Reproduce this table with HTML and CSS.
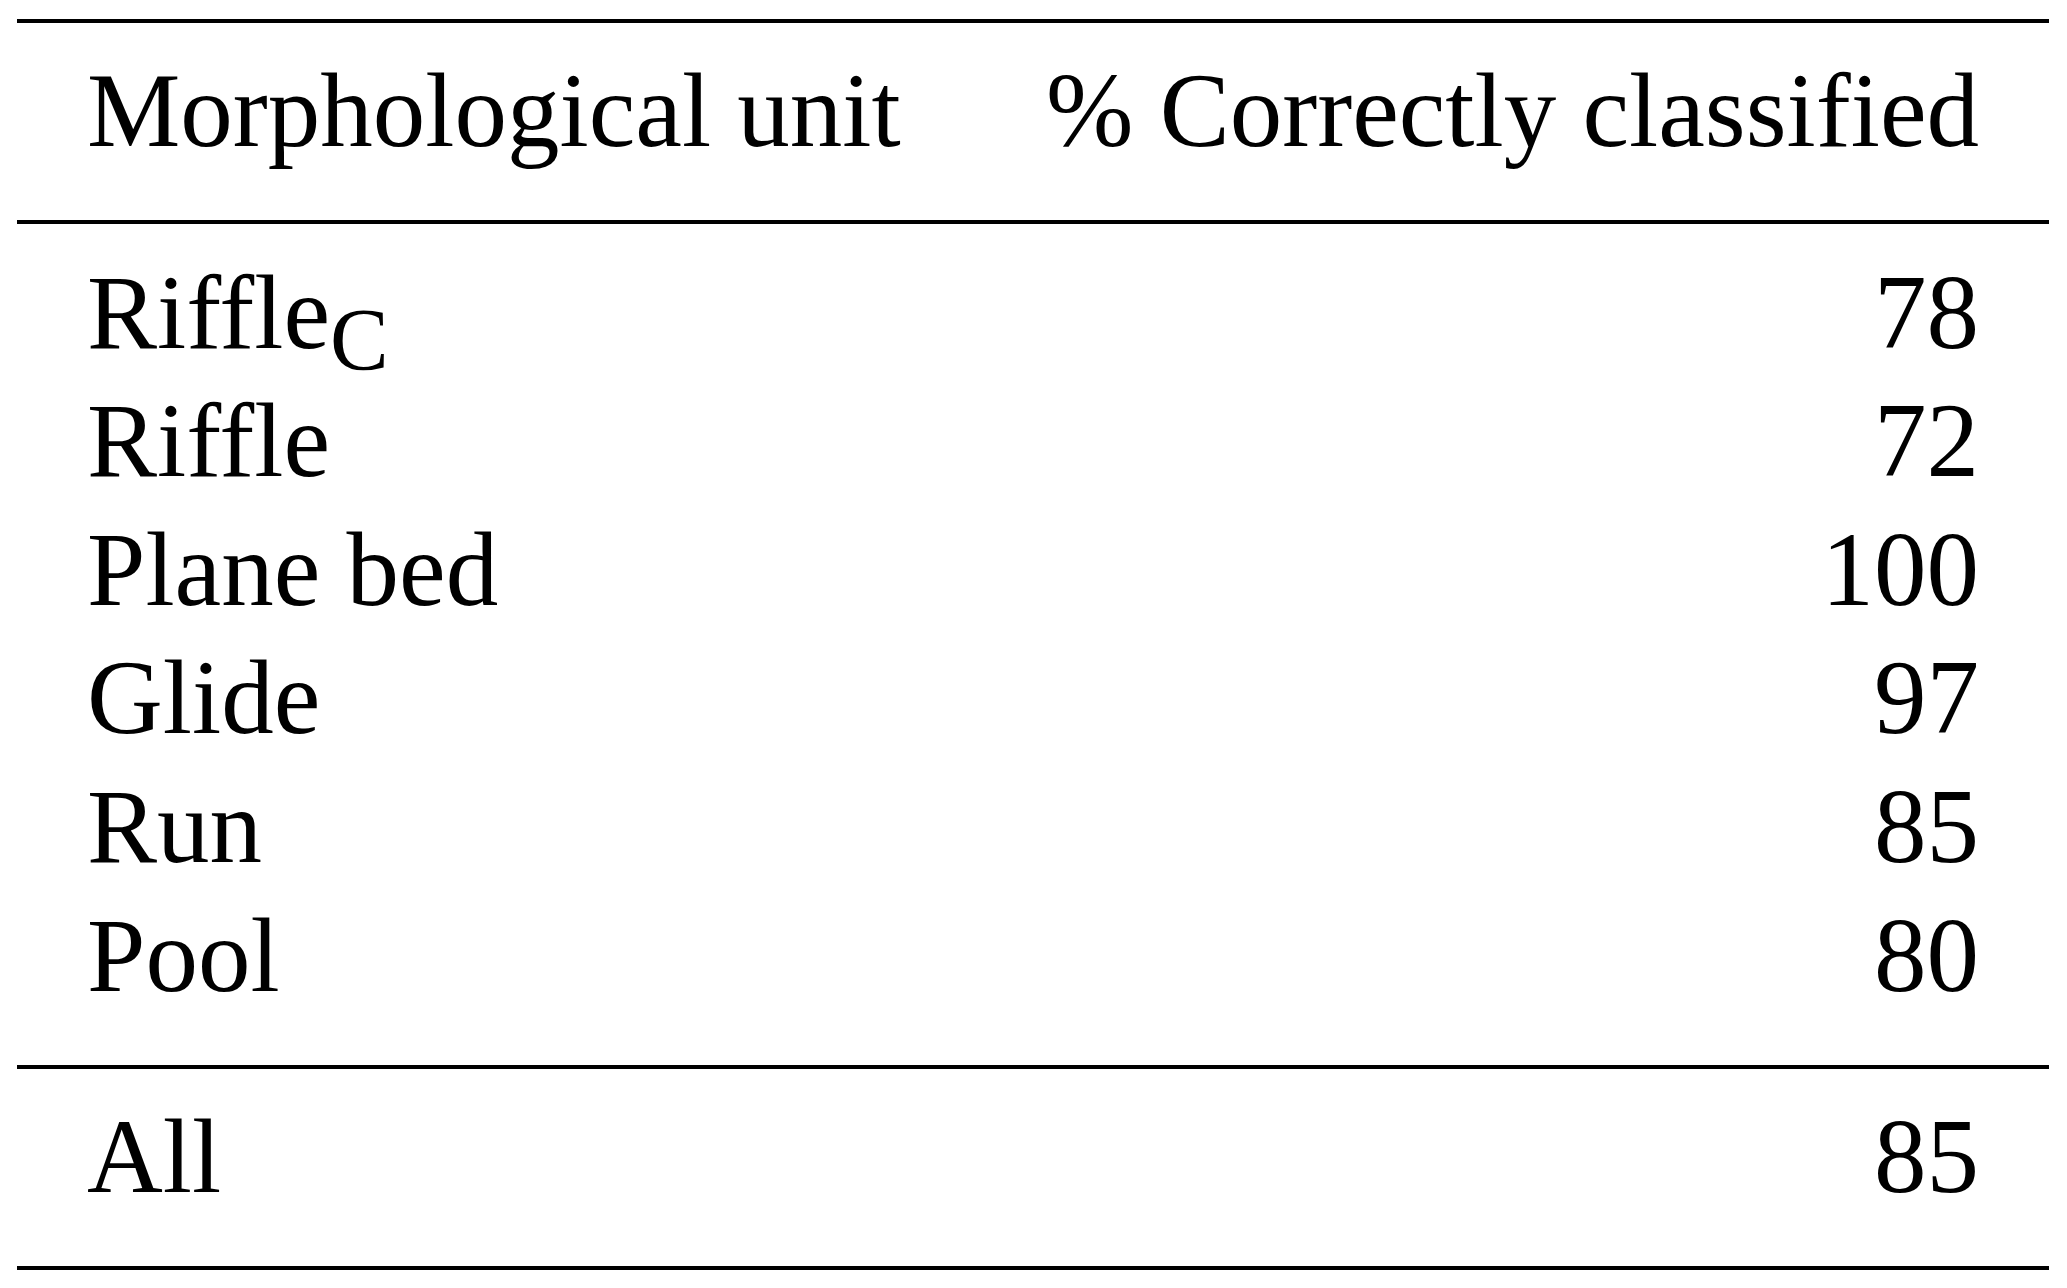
FILE: index.html
```html
<!DOCTYPE html>
<html lang="en">
<head>
<meta charset="utf-8">
<title>Morphological unit classification</title>
<link rel="stylesheet" href="styles.css">
</head>
<body>
<div class="table">
  <div class="group">
    <div class="row"><span class="cell">Morphological unit</span><span class="cell num">% Correctly classified</span></div>
  </div>
  <div class="group">
    <div class="row"><span class="cell">Riffle<sub class="sub">C</sub></span><span class="cell num">78</span></div>
    <div class="row"><span class="cell">Riffle</span><span class="cell num">72</span></div>
    <div class="row"><span class="cell">Plane bed</span><span class="cell num">100</span></div>
    <div class="row"><span class="cell">Glide</span><span class="cell num">97</span></div>
    <div class="row"><span class="cell">Run</span><span class="cell num">85</span></div>
    <div class="row"><span class="cell">Pool</span><span class="cell num">80</span></div>
  </div>
  <div class="group">
    <div class="row"><span class="cell">All</span><span class="cell num">85</span></div>
  </div>
</div>
</body>
</html>
```

FILE: styles.css
```css
html, body {
  margin: 0;
  padding: 0;
  background: #ffffff;
}

body {
  font-family: "Liberation Serif", "Times New Roman", serif;
  color: #000000;
}

.table {
  width: 2032px;
  margin: 19px 0 0 17px;
  border-top: 4px solid #000;
  border-bottom: 4px solid #000;
}

.group {
  padding: 24.3px 70px 44.5px 70px;
}

.group + .group {
  border-top: 4px solid #000;
}

.row {
  display: flex;
  justify-content: space-between;
  align-items: baseline;
  font-size: 105px;
  line-height: 128.6px;
  white-space: nowrap;
}

.cell.num {
  text-align: right;
}

.sub {
  font-size: 88px;
  line-height: 0;
  vertical-align: -21px;
}
```
